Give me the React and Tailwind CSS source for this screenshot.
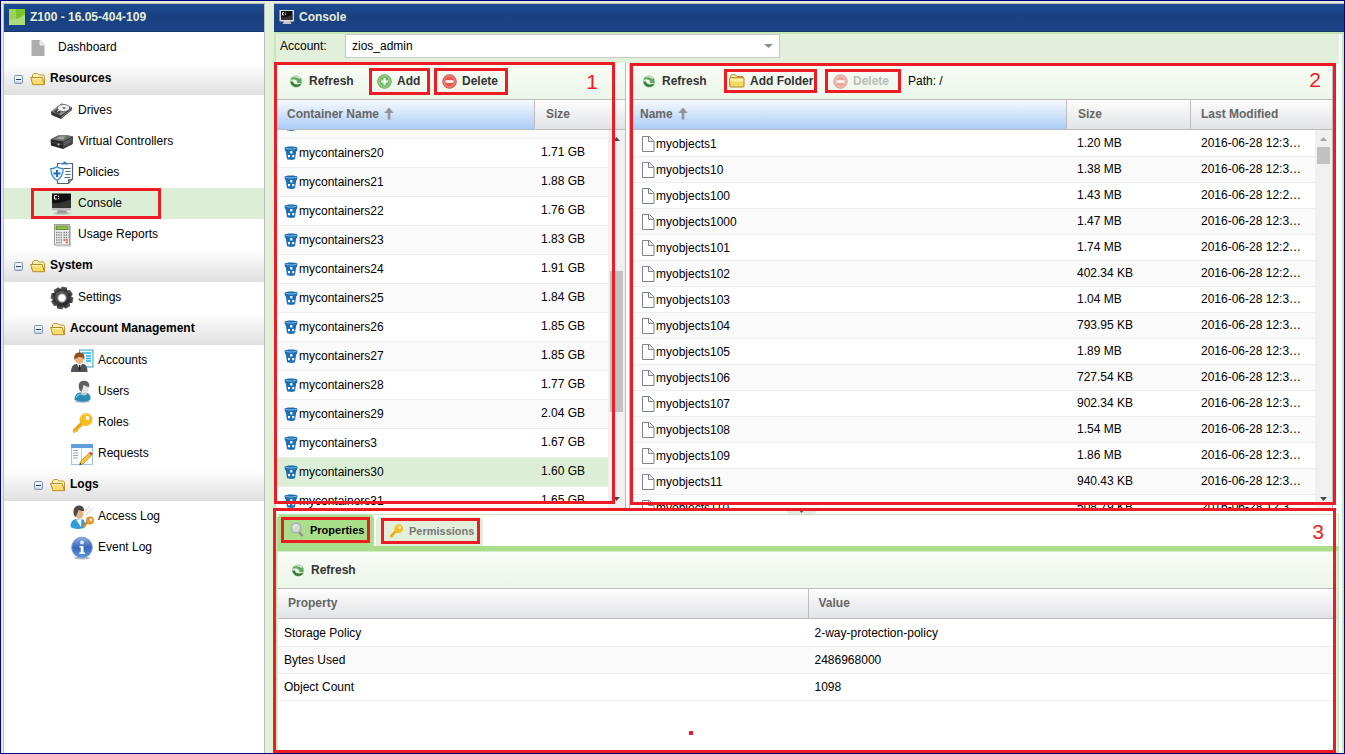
import React from "react";

/* ---------- icons ---------- */

const PageIcon = () => (
  <svg width="14" height="16" viewBox="0 0 14 16" aria-hidden="true">
    <path d="M0.500 0H9L13.500 5V16H0.500Z" fill="#adadad" />
    <path d="M9 0.500V5H13" fill="#e4e4e4" stroke="#fff" strokeWidth="0.800" />
  </svg>
);

const ExpanderIcon = () => (
  <svg width="9" height="9" viewBox="0 0 9 9" aria-hidden="true">
    <rect x="0.500" y="0.500" width="8" height="8" rx="1" fill="#eef2f7" stroke="#7f96b5" />
    <path d="M1 6.500H8V8H1Z" fill="#c5d0df" />
    <path d="M2 4.500H7" stroke="#1c3a6b" />
  </svg>
);

const OpenFolderIcon = () => (
  <svg width="16" height="14" viewBox="0 0 16 14" aria-hidden="true">
    <path d="M2.500 12V3L4 1.500H7.500L9 3H13.500L14.500 4.500V12.500" fill="#fdf3b4" stroke="#c09434" />
    <path d="M0.600 5.500H12.300L14.400 12.700H2.800Z" fill="#f9dc6b" stroke="#b98a29" strokeLinejoin="round" />
    <path d="M1.800 6.700H11.600" stroke="#fff6c4" />
  </svg>
);

const FolderIcon = () => (
  <svg width="16" height="14" viewBox="0 0 16 14" aria-hidden="true">
    <path d="M1.500 4V2L2.500 0.800H6.500L8 2.500H14V5" fill="#fdf0b0" stroke="#bd8f33" />
    <rect x="0.700" y="3.700" width="14.300" height="9.300" rx="1" fill="#f8d75e" stroke="#b5862a" />
    <path d="M1.500 4.800H14.200V7.500H1.500Z" fill="#fff3a8" />
  </svg>
);

const DriveIcon = () => (
  <svg width="24" height="24" viewBox="0 0 24 24" aria-hidden="true">
    <path d="M1 12.500L12 4.500L22 8.500V11L11 20L1.500 16Z" fill="#333" />
    <path d="M1 12.300L12 4.500L22 8.500L11 16.500Z" fill="#8f8f8f" />
    <ellipse cx="13.500" cy="9" rx="6.200" ry="3.500" fill="#f1f1f1" stroke="#4a4a4a" strokeWidth="0.700" />
    <ellipse cx="13.800" cy="9" rx="2" ry="1.100" fill="#7a7a7a" />
    <path d="M3.500 12.500L7.500 10L11 13L8.500 15Z" fill="#3f3f3f" />
    <path d="M7 12.500L13 9" stroke="#fff" strokeWidth="0.900" />
    <path d="M11 18.500L22 10" stroke="#a9a9a9" strokeWidth="0.800" />
  </svg>
);

const ControllerIcon = () => (
  <svg width="24" height="24" viewBox="0 0 24 24" aria-hidden="true">
    <path d="M0.500 9.500L8 5.500H18L23 6.500L22.500 14L13 19L1 15.500Z" fill="#242424" />
    <path d="M0.500 9.500L8 5.500H18L23 6.500L13 11.500Z" fill="#6e6e6e" />
    <path d="M6 8.500L10 6.500H16L13 9.500Z" fill="#a5a5a5" />
    <path d="M13 11.500L23 6.500L22.500 14L13 19Z" fill="#454545" />
    <path d="M1 12L12.500 14.500" stroke="#555" strokeWidth="0.800" />
    <path d="M14 15L21.500 11M14 13L21.500 9" stroke="#8a8a8a" strokeWidth="0.600" />
    <circle cx="8.500" cy="14.500" r="1" fill="#c8c8c8" />
  </svg>
);

const PolicyIcon = () => (
  <svg width="24" height="24" viewBox="0 0 24 24" aria-hidden="true">
    <path d="M7.500 5.500V2.500H10.500M18.500 2.500H22.500V18L18.500 22.500H7.500V20" fill="none" stroke="#50617a" strokeWidth="1.200" />
    <path d="M18.500 22.500V18.500H22.500" fill="#8594a8" stroke="#50617a" />
    <path d="M11 3.500V2H13.500V0.800H16V2H18.500V3.500Z" fill="#2e7cc2" />
    <path d="M14 7.500H20.500M15.500 10.500H20.500M15.500 13.500H20.500M14.500 16.500H20.500" stroke="#50617a" strokeWidth="1.200" />
    <path d="M7 5.700C5 7.200 3 7.500 0.800 7.600C0.800 13 2.500 17 7 19.500C11.500 17 13.200 13 13.200 7.600C11 7.500 9 7.200 7 5.700Z" fill="#e9f4fd" stroke="#2f86cc" strokeWidth="1.200" />
    <path d="M7 9V16M3.500 12.500H10.500" stroke="#1f6fb5" strokeWidth="2" />
  </svg>
);

const ConsoleIcon = () => (
  <svg width="24" height="24" viewBox="0 0 24 24" aria-hidden="true">
    <ellipse cx="12" cy="21.500" rx="9" ry="1.600" fill="#c3cbc0" />
    <path d="M8 18H16L17.500 21.500H6.500Z" fill="#9c9c9c" />
    <path d="M2 16H21V18.500H2Z" fill="#bcbcbc" />
    <rect x="2" y="1.500" width="19" height="14.500" fill="#111" />
    <path d="M2 11C8 12 15 10 21 7V16H2Z" fill="#363636" />
    <path d="M6.800 3.500H4.500V7H6.800M8.500 3.800V5M8.500 6V7.200" stroke="#fff" fill="none" />
  </svg>
);

const SmallConsoleIcon = () => (
  <svg width="16" height="16" viewBox="0 0 16 16" aria-hidden="true">
    <path d="M5 12H11L12.500 15H3.500Z" fill="#c4c4c4" />
    <rect x="0.500" y="1" width="14.500" height="11.500" rx="0.500" fill="#dcdcdc" />
    <rect x="2" y="2" width="11.500" height="9" fill="#101010" />
    <path d="M2 8.500C6 9 10 7.500 13.500 5.500V11H2Z" fill="#333" />
    <path d="M5 3.500H3.500V6H5M6.500 3.600V4.400M6.500 5.200V6" stroke="#fff" strokeWidth="0.900" fill="none" />
  </svg>
);

const CalculatorIcon = () => (
  <svg width="24" height="24" viewBox="0 0 24 24" aria-hidden="true">
    <rect x="4.500" y="1.500" width="15" height="20.500" fill="#f0f0f0" stroke="#9b9b9b" />
    <rect x="6" y="3" width="12" height="3.600" fill="#8cc63f" stroke="#55702c" strokeWidth="0.800" />
    <path d="M6 9.500H12M6 12H12M6 14.500H12M6 17H12M6 19.500H12" stroke="#858585" strokeWidth="1.300" strokeDasharray="1.400 0.900" />
    <path d="M13.500 9.500H18.500M13.500 12H18.500M13.500 14.500H18.500" stroke="#777" strokeWidth="1.300" strokeDasharray="1.400 0.900" />
    <path d="M13.500 17H18.500M16 19.500H18.500" stroke="#d43a2c" strokeWidth="1.700" strokeDasharray="1.800 0.700" />
    <path d="M20.600 3V23H6" stroke="#c4c4c4" fill="none" />
  </svg>
);

const GearIcon = () => (
  <svg width="24" height="24" viewBox="0 0 24 24" aria-hidden="true">
    <defs>
      <linearGradient id="gear" x1="0" y1="0" x2="0.600" y2="1">
        <stop offset="0" stopColor="#707070" />
        <stop offset="1" stopColor="#262626" />
      </linearGradient>
    </defs>
    <g fill="url(#gear)">
      <circle cx="12" cy="12" r="9" />
      {[0, 45, 90, 135, 180, 225, 270, 315].map((a) => (
        <path key={a} d="M8 5L9.300 0.800H14.700L16 5Z" transform={`rotate(${a + 12} 12 12)`} />
      ))}
    </g>
    <circle cx="12" cy="12" r="4.200" fill="#fff" stroke="#8d8d8d" />
  </svg>
);

const AccountsIcon = () => (
  <svg width="24" height="24" viewBox="0 0 24 24" aria-hidden="true">
    <rect x="9.500" y="1" width="13.500" height="17" fill="#e8f7fd" stroke="#3b9fd0" />
    <path d="M12 4H21M16 7H21M16 9.500H21M16 12H21" stroke="#27b4e8" strokeWidth="1.500" />
    <path d="M1 23C1 18 3 15.500 6 15H13C16 15.500 17.500 18 17.500 23Z" fill="#4f5257" />
    <path d="M7 15L9.500 20L12 15Z" fill="#f4f4f4" />
    <path d="M9 16H10.200L10.800 20L9.500 22L8.500 20Z" fill="#222" />
    <ellipse cx="9.300" cy="10" rx="4.200" ry="5" fill="#eeb27a" />
    <path d="M4.500 11C3.500 6 5.500 3.500 9.500 3.500S15 6 14.200 11C13.500 9 12 7.800 9 8C7.500 8.500 5.800 9 4.500 11Z" fill="#8b4f20" />
  </svg>
);

const UserIcon = () => (
  <svg width="24" height="24" viewBox="0 0 24 24" aria-hidden="true">
    <ellipse cx="12.500" cy="21.500" rx="8" ry="1.500" fill="#bfc7cb" />
    <path d="M4.500 19.500C4.500 15 7 12.800 10 12.500H16C19.500 13.500 21 16 20.500 19.500C17 22.500 8 22.500 4.500 19.500Z" fill="#2a8cb5" />
    <path d="M6 17.500C7 15 8.500 14.300 11 14.500" stroke="#73c4df" strokeWidth="1.200" fill="none" />
    <path d="M11 11H17V14C15 16 12.500 16 11 14Z" fill="#c7c7c7" />
    <ellipse cx="14.500" cy="8" rx="4.300" ry="5.300" fill="#e2e2e2" />
    <path d="M9 8.500C8 3.500 10 0.800 14 0.800S20 3.500 19 7C17 7 15 6 13.500 4.800C13.500 7.500 12 9 11.800 11.500C10 11.500 9.300 10 9 8.500Z" fill="#606060" />
  </svg>
);

const KeyIcon = ({ size = 24 }) => (
  <svg width={size} height={size} viewBox="0 0 24 24" aria-hidden="true">
    <path d="M12 9.500L15 12.500L8 19L7.500 21.500L5.500 20.500L5 22L3 21.500V18.500Z" fill="#f0b321" />
    <circle cx="16" cy="8.500" r="6.500" fill="#f6bd20" />
    <path d="M11 12.500L4 19.500" stroke="#d98e16" />
    <path d="M10.500 7C11.500 4 14.500 2.800 17 3.200" stroke="#ffdf70" fill="none" />
    <circle cx="17.500" cy="7" r="1.900" fill="#fff" />
  </svg>
);

const RequestsIcon = () => (
  <svg width="24" height="24" viewBox="0 0 24 24" aria-hidden="true">
    <rect x="1.500" y="2.500" width="21" height="20" fill="#f9fcff" stroke="#9ec4e8" />
    <path d="M1 2H23V6H1Z" fill="#5f9fdc" />
    <path d="M3 8.500H8M3 11H8M3 13.500H8M3 16H8" stroke="#9aa9bc" />
    <path d="M11.500 6V22" stroke="#bdd7ef" />
    <path d="M9.500 23L10.500 19.500L19 11L21.500 13.500L13 22Z" fill="#f5c232" stroke="#b98a22" strokeWidth="0.700" />
    <path d="M19 11L20.500 9.500L23 12L21.500 13.500Z" fill="#d6453e" />
    <path d="M9.500 23L10.200 20.800L11.800 22.300Z" fill="#333" />
  </svg>
);

const AccessLogIcon = () => (
  <svg width="24" height="24" viewBox="0 0 24 24" aria-hidden="true">
    <path d="M14 7L20 1M15.500 10L23 3" stroke="#dedede" strokeWidth="1.200" />
    <path d="M0.500 22C0.500 17 2.500 14.500 6 14H12C14.500 15 15.500 17.500 15.500 22C12 24.500 4 24.500 0.500 22Z" fill="#2f9fd6" />
    <path d="M6 14.500L11 22L11.500 14Z" fill="#f3f7fa" />
    <ellipse cx="9.300" cy="8.500" rx="4.200" ry="5.300" fill="#e6b586" />
    <path d="M3.500 8C3 3 5.500 0.500 9 0.500S14.500 3 14 6C11 6 9.500 5.500 8.500 5C8 8 6.500 9 6 12C4.500 11.500 3.800 10 3.500 8Z" fill="#4b4b4b" />
    <path d="M17 15.500L19 17.500L14 22.500L12 22Z" fill="#e08a1e" />
    <circle cx="20" cy="15.500" r="3.700" fill="#f19d2c" stroke="#c8701a" strokeWidth="0.600" />
    <circle cx="21" cy="14.800" r="1.200" fill="#fff" />
  </svg>
);

const InfoIcon = () => (
  <svg width="24" height="24" viewBox="0 0 24 24" aria-hidden="true">
    <defs>
      <linearGradient id="info" x1="0" y1="0" x2="0" y2="1">
        <stop offset="0" stopColor="#8fb0e0" />
        <stop offset="0.500" stopColor="#3566bd" />
        <stop offset="1" stopColor="#5a9bea" />
      </linearGradient>
    </defs>
    <ellipse cx="12" cy="22" rx="8" ry="1.400" fill="#b5bac4" />
    <circle cx="12" cy="11.500" r="10.300" fill="url(#info)" stroke="#7b98c8" />
    <circle cx="12" cy="6.500" r="2" fill="#dfe8f8" />
    <path d="M9.500 10H13.500V16.500H15V18H9.300V16.500H10.700V11.500H9.500Z" fill="#fff" />
  </svg>
);

const RefreshIcon = () => (
  <svg width="14" height="14" viewBox="0 0 14 14" aria-hidden="true">
    <circle cx="7" cy="7.500" r="5.600" fill="#e3f0e1" stroke="#9fc09d" strokeWidth="0.900" />
    <path d="M2 3.800C5 2.600 8.500 3 10.500 5L12 3.800L12.300 9.300L6.500 9L8.500 7.300C7 5.500 5 5 2 5.800Z" fill="#5fab5c" />
    <path d="M1.500 7.500C1.800 10.500 4 12.800 7 13C9.500 13 11.500 11.800 12.300 10L9 10.200C7 10.800 4.500 10 3.800 7.500Z" fill="#2f7d38" />
    <path d="M4.500 6L8 9.500" stroke="#fff" strokeWidth="1.200" />
  </svg>
);

const AddIcon = () => (
  <svg width="15" height="15" viewBox="0 0 15 15" aria-hidden="true">
    <circle cx="7.500" cy="7.500" r="6.800" fill="#6fb964" stroke="#569a4d" strokeWidth="0.800" />
    <circle cx="7.500" cy="7.500" r="5.600" fill="none" stroke="#b9dfb1" strokeWidth="0.900" />
    <path d="M7.500 4V11M4 7.500H11" stroke="#fff" strokeWidth="2" />
  </svg>
);

const RemoveIcon = () => (
  <svg width="15" height="15" viewBox="0 0 15 15" aria-hidden="true">
    <circle cx="7.500" cy="7.500" r="6.800" fill="#e4584d" stroke="#c4453b" strokeWidth="0.800" />
    <circle cx="7.500" cy="7.500" r="5.600" fill="none" stroke="#f2a49c" strokeWidth="0.900" />
    <rect x="3.500" y="6.200" width="8" height="2.600" fill="#fff" />
  </svg>
);

const SearchIcon = () => (
  <svg width="16" height="16" viewBox="0 0 16 16" aria-hidden="true">
    <path d="M9.500 9.500L13.500 14" stroke="#8b8b8b" strokeWidth="2.400" />
    <circle cx="7" cy="6" r="4.800" fill="#d3dccf" stroke="#adadad" strokeWidth="1.500" />
    <path d="M4.500 5C5 3.500 6.500 2.900 8 3.300" stroke="#fff" fill="none" />
  </svg>
);

const BucketIcon = () => (
  <svg width="14" height="14" viewBox="0 0 14 14" aria-hidden="true">
    <path d="M0.500 2C0.500 0 13.500 0 13.500 2L13 4.800L12.200 5.500L11 13C9.500 14.200 4.500 14.200 3 13L1.800 5.500L1 4.800Z" fill="#1c6fb5" />
    <path d="M1.500 2.200C4 3.300 10 3.300 12.500 2.200" stroke="#8fbfe4" strokeWidth="0.900" fill="none" />
    <path d="M6.200 5H8.400V7.400H6.200ZM4 9H6V11.200H4ZM8.200 9H10.200V11.200H8.200Z" fill="#fff" />
  </svg>
);

const FileIcon = () => (
  <svg width="13" height="16" viewBox="0 0 13 16" aria-hidden="true">
    <path d="M0.500 0.500H7.500L12 5V15.500H0.500Z" fill="#fff" stroke="#7b828b" />
    <path d="M6.500 1V5.500H11.500" fill="#eceef0" stroke="#7b828b" />
  </svg>
);

const SortIcon = () => (
  <svg width="10" height="13" viewBox="0 0 10 13" aria-hidden="true">
    <path d="M5 0.500L9.700 6H6.300V12.500H3.700V6H0.300Z" fill="#939599" />
  </svg>
);

const Arrow = ({ down = false, color = "#4a4a4a", width = 7 }) => (
  <svg width={width} height="4" viewBox="0 0 7 4" preserveAspectRatio="none" aria-hidden="true">
    <path d={down ? "M0 0H7L3.500 4Z" : "M0 4H7L3.500 0Z"} fill={color} />
  </svg>
);

/* ---------- data ---------- */

const NAV = [
  { label: "Dashboard", icon: PageIcon, level: 0 },
  { label: "Resources", group: true, level: 0 },
  { label: "Drives", icon: DriveIcon, level: 1 },
  { label: "Virtual Controllers", icon: ControllerIcon, level: 1 },
  { label: "Policies", icon: PolicyIcon, level: 1 },
  { label: "Console", icon: ConsoleIcon, level: 1, active: true },
  { label: "Usage Reports", icon: CalculatorIcon, level: 1 },
  { label: "System", group: true, level: 0 },
  { label: "Settings", icon: GearIcon, level: 1 },
  { label: "Account Management", group: true, level: 1 },
  { label: "Accounts", icon: AccountsIcon, level: 2 },
  { label: "Users", icon: UserIcon, level: 2 },
  { label: "Roles", icon: KeyIcon, level: 2 },
  { label: "Requests", icon: RequestsIcon, level: 2 },
  { label: "Logs", group: true, level: 1 },
  { label: "Access Log", icon: AccessLogIcon, level: 2 },
  { label: "Event Log", icon: InfoIcon, level: 2 },
];

// The first row is scrolled almost fully out of view.
const CONTAINERS = [
  ["", ""],
  ["mycontainers20", "1.71 GB"],
  ["mycontainers21", "1.88 GB"],
  ["mycontainers22", "1.76 GB"],
  ["mycontainers23", "1.83 GB"],
  ["mycontainers24", "1.91 GB"],
  ["mycontainers25", "1.84 GB"],
  ["mycontainers26", "1.85 GB"],
  ["mycontainers27", "1.85 GB"],
  ["mycontainers28", "1.77 GB"],
  ["mycontainers29", "2.04 GB"],
  ["mycontainers3", "1.67 GB"],
  ["mycontainers30", "1.60 GB"],
  ["mycontainers31", "1.65 GB"],
];

const OBJECTS = [
  ["myobjects1", "1.20 MB", "2016-06-28 12:3…"],
  ["myobjects10", "1.38 MB", "2016-06-28 12:3…"],
  ["myobjects100", "1.43 MB", "2016-06-28 12:2…"],
  ["myobjects1000", "1.47 MB", "2016-06-28 12:3…"],
  ["myobjects101", "1.74 MB", "2016-06-28 12:2…"],
  ["myobjects102", "402.34 KB", "2016-06-28 12:2…"],
  ["myobjects103", "1.04 MB", "2016-06-28 12:3…"],
  ["myobjects104", "793.95 KB", "2016-06-28 12:3…"],
  ["myobjects105", "1.89 MB", "2016-06-28 12:3…"],
  ["myobjects106", "727.54 KB", "2016-06-28 12:3…"],
  ["myobjects107", "902.34 KB", "2016-06-28 12:3…"],
  ["myobjects108", "1.54 MB", "2016-06-28 12:3…"],
  ["myobjects109", "1.86 MB", "2016-06-28 12:3…"],
  ["myobjects11", "940.43 KB", "2016-06-28 12:3…"],
  ["myobjects110", "508.79 KB", "2016-06-28 12:3…"],
];

const PROPERTIES = [
  ["Storage Policy", "2-way-protection-policy"],
  ["Bytes Used", "2486968000"],
  ["Object Count", "1098"],
];

/* ---------- shared pieces ---------- */

const TITLE_BAR =
  "flex h-7 shrink-0 items-center border-b border-[#17386f] bg-linear-to-b from-[#1e4c95] from-0% via-[#19407f] via-45% to-[#1b4488] pb-0.5 font-bold text-[#e6eed9]";
const TOOLBAR = "flex shrink-0 items-center bg-linear-to-b from-[#f8fcf6] to-[#ecf6e9]";
const HEAD = "h-[31px] border-y border-[#bcbcbc] bg-linear-to-b from-[#fdfdfd] to-[#e2e3e6] pb-0.5 text-left font-bold text-[#666]";
const HEAD_SORTED = "h-[31px] border-y border-[#bcbcbc] bg-linear-to-b from-[#f7fafe] to-[#aaccf6] pb-0.5 text-left font-bold text-[#666]";
const TABLE = "w-full table-fixed border-separate border-spacing-0";
const MARK = "pointer-events-none absolute border-[3px] border-[#ed1c24]";
const MARK_NUMBER = "pointer-events-none absolute text-[21px] leading-6 text-[#ed1c24]";

function ToolButton({ icon, children, className = "gap-1.5", disabled = false }) {
  return (
    <button
      type="button"
      disabled={disabled}
      className={`flex items-center whitespace-nowrap font-bold ${className}`}
    >
      {icon}
      <span>{children}</span>
    </button>
  );
}

const INDENT = ["pl-[10px]", "pl-[30px]", "pl-[50px]"];

function NavItem({ item }) {
  const Icon = item.icon;
  if (item.group) {
    return (
      <li>
        <button
          type="button"
          aria-expanded="true"
          className={`flex h-8 w-full items-center bg-linear-to-b from-white to-[#e0e0e0] pb-0.5 font-bold ${INDENT[item.level]}`}
        >
          <span className="mr-[7px] pt-0.5"><ExpanderIcon /></span>
          <span className="mr-1 pt-0.5"><OpenFolderIcon /></span>
          {item.label}
        </button>
      </li>
    );
  }
  const pad = item.level === 0 ? "pl-[27px] gap-[13px]" : item.level === 1 ? "pl-[46px] gap-1" : "pl-[66px] gap-1";
  return (
    <li>
      <a
        href={"#" + item.label.toLowerCase().replace(" ", "-")}
        aria-current={item.active ? "page" : undefined}
        className={`relative flex h-[31px] items-center ${pad} ${item.active ? "bg-[#dcefd6]" : ""}`}
      >
        <Icon />
        <span className="pb-0.5">{item.label}</span>
        {item.active && <span className={`${MARK} inset-y-0 left-[27px] w-[130px]`} />}
      </a>
    </li>
  );
}

function Sidebar() {
  return (
    <aside className="flex w-[262px] shrink-0 flex-col border-x border-t border-[#bcbcbc] bg-white">
      <div className={`${TITLE_BAR} gap-[5px] pl-[5px]`}>
        <svg width="16" height="16" viewBox="0 0 16 16" aria-hidden="true">
          <path d="M0 0H16V16H0Z" fill="#8ccb47" />
          <path d="M0 0H7V16H0Z" fill="#9ad45f" />
          <path d="M0 11C5 11 12 9 16 5V16H0Z" fill="#a9dc7c" />
          <path d="M7 0H16V5C13 7.500 10 9 7 10Z" fill="#7cc22f" />
        </svg>
        Z100 - 16.05-404-109
      </div>
      <nav aria-label="Main">
        <ul>
          {NAV.map((item) => (
            <NavItem key={item.label} item={item} />
          ))}
        </ul>
      </nav>
    </aside>
  );
}

function Scrollbar({ topColor, children }) {
  return (
    <div className="flex w-[17px] shrink-0 flex-col items-center bg-[#f0f0f0] py-[7px]" aria-hidden="true">
      <Arrow color={topColor} />
      <div className="flex w-full flex-1 flex-col items-center">{children}</div>
      <Arrow down />
    </div>
  );
}

function ContainerPanel() {
  return (
    <section aria-label="Containers" className="relative flex w-[350px] shrink-0 flex-col border-r border-[#bcbcbc] bg-white">
      <div className={`${TOOLBAR} h-9 pl-[13px] text-[#333]`}>
        <ToolButton icon={<RefreshIcon />} className="w-20 gap-1.5">Refresh</ToolButton>
        <ToolButton icon={<AddIcon />} className="h-[27px] w-[61px] gap-[5px] border-[3px] border-[#ed1c24] pl-[5px]">Add</ToolButton>
        <ToolButton icon={<RemoveIcon />} className="ml-1 h-[27px] w-[74px] gap-[5px] border-[3px] border-[#ed1c24] pl-[5px]">Delete</ToolButton>
      </div>
      <table className={TABLE}>
        <thead>
          <tr>
            <th scope="col" aria-sort="ascending" className={`${HEAD_SORTED} pl-[11px]`}>
              <span className="flex items-center gap-[5px]">Container Name <SortIcon /></span>
            </th>
            <th scope="col" className={`${HEAD} w-[91px] border-l pl-[11px]`}>Size</th>
          </tr>
        </thead>
      </table>
      <div className="flex min-h-0 flex-1">
        <div className="min-w-0 flex-1 overflow-hidden">
          <table aria-label="Containers" className={`${TABLE} -mt-5`}>
            <tbody>
              {CONTAINERS.map(([name, size], i) => {
                const bg = name === "mycontainers30" ? "bg-[#dcefd6]" : i % 2 === 0 ? "bg-[#fafafa]" : "bg-white";
                return (
                  <tr key={i} className={bg}>
                    <td className="h-[29px] border-b border-[#ededed] pl-2">
                      <span className="flex items-center gap-px"><BucketIcon />{name}</span>
                    </td>
                    <td className="h-[29px] w-[74px] border-b border-[#ededed] pb-0.5 pl-[7px]">{size}</td>
                  </tr>
                );
              })}
            </tbody>
          </table>
        </div>
        <Scrollbar>
          <div className="grow-129 basis-0" />
          <div className="w-[13px] grow-140 basis-0 bg-[#c1c1c1]" />
          <div className="grow-84 basis-0" />
        </Scrollbar>
      </div>
      <span className={`${MARK} -left-0.5 right-2.5 -top-px bottom-1`} />
      <span className={`${MARK_NUMBER} right-[27px] top-[7px]`}>1</span>
    </section>
  );
}

function ObjectPanel() {
  return (
    <section aria-label="Objects" className="relative ml-[3px] mr-1.5 flex min-w-0 flex-1 flex-col border-x border-[#bcbcbc] bg-white">
      <div className={`${TOOLBAR} h-9 pl-3 text-[#333]`}>
        <ToolButton icon={<RefreshIcon />} className="w-[82px] gap-1.5">Refresh</ToolButton>
        <ToolButton icon={<FolderIcon />} className="h-6 w-[93px] gap-[5px] border-[3px] border-[#ed1c24] pl-0.5">Add Folder</ToolButton>
        <ToolButton
          disabled
          icon={<span className="opacity-50"><RemoveIcon /></span>}
          className="ml-2 h-6 w-[76px] gap-[5px] border-[3px] border-[#ed1c24] pl-[5px] text-[#b9bdb8]"
        >
          Delete
        </ToolButton>
        <span className="ml-[7px] text-black">Path: /</span>
      </div>
      <table className={TABLE}>
        <thead>
          <tr>
            <th scope="col" aria-sort="ascending" className={`${HEAD_SORTED} pl-2.5`}>
              <span className="flex items-center gap-[5px]">Name <SortIcon /></span>
            </th>
            <th scope="col" className={`${HEAD} w-[124px] border-l pl-[11px]`}>Size</th>
            <th scope="col" className={`${HEAD} w-[142px] border-l pl-2.5`}>Last Modified</th>
          </tr>
        </thead>
      </table>
      <div className="flex min-h-0 flex-1">
        <div className="min-w-0 flex-1 overflow-hidden pt-px">
          <table aria-label="Objects" className={TABLE}>
            <tbody>
              {OBJECTS.map(([name, size, date], i) => (
                <tr key={name} className={i % 2 ? "bg-[#fafafa]" : "bg-white"}>
                  <td className="h-[26px] border-b border-[#ededed] pl-3">
                    <span className="flex items-center gap-px"><FileIcon />{name}</span>
                  </td>
                  <td className="h-[26px] w-[124px] border-b border-[#ededed] pb-0.5 pl-[11px]">{size}</td>
                  <td className="h-[26px] w-[125px] whitespace-nowrap border-b border-[#ededed] pb-0.5 pl-[11px]">{date}</td>
                </tr>
              ))}
            </tbody>
          </table>
        </div>
        <Scrollbar topColor="#a3a3a3">
          <div className="mt-1.5 h-[17px] w-[13px] bg-[#c1c1c1]" />
        </Scrollbar>
      </div>
      <span className={`${MARK} -right-1 bottom-[3px] left-0 top-0`} />
      <span className={`${MARK_NUMBER} right-[11px] top-[5px]`}>2</span>
    </section>
  );
}

function DetailPanel() {
  return (
    <section aria-label="Container details" className="relative flex h-[245px] shrink-0 flex-col bg-white">
      <div className="flex h-1.5 justify-center pr-3">
        <div className="flex w-[30px] items-end justify-center rounded-b bg-[#e6e6e6] pb-px">
          <Arrow down />
        </div>
      </div>
      <div className="flex min-h-0 flex-1 flex-col border border-b-2 border-[#c5e8b7]">
        <div role="tablist" className="flex h-[31px] shrink-0 items-end gap-0.5">
          <button
            type="button"
            role="tab"
            aria-selected="true"
            className="flex h-[31px] w-[97px] items-center rounded-t bg-[#a9df8b] pb-0.5 pl-1 font-bold text-black"
          >
            <span className="flex h-[26px] w-[89px] items-center gap-[5px] whitespace-nowrap border-[3px] border-[#ed1c24] pl-[5px] text-[11px]">
              <SearchIcon />
              Properties
            </span>
          </button>
          <button
            type="button"
            role="tab"
            aria-selected="false"
            className="flex h-[29px] w-[107px] items-center rounded-t bg-[#e2f0db] pb-0.5 pl-[5px] font-bold text-[#777]"
          >
            <span className="flex h-[26px] w-[99px] items-center gap-[5px] whitespace-nowrap border-[3px] border-[#ed1c24] pl-1 text-[11px]">
              <KeyIcon size={16} />
              Permissions
            </span>
          </button>
        </div>
        <div className="h-[5px] shrink-0 bg-[#a9df8b]" />
        <div className="flex min-h-0 flex-1 flex-col border-x border-t border-[#d3edc8]">
          <div className={`${TOOLBAR} h-9 pl-[13px] text-[#333]`}>
            <ToolButton icon={<RefreshIcon />}>Refresh</ToolButton>
          </div>
          <table className={TABLE}>
            <thead>
              <tr>
                <th scope="col" className={`${HEAD} w-1/2 pl-2.5`}>Property</th>
                <th scope="col" className={`${HEAD} border-l pl-2.5`}>Value</th>
              </tr>
            </thead>
            <tbody>
              {PROPERTIES.map(([name, value], i) => (
                <tr key={name} className={i % 2 ? "h-[27px] bg-[#fafafa]" : "h-[27px] bg-white first:h-7"}>
                  <td className="border-b border-[#ededed] pl-1.5">{name}</td>
                  <td className="border-b border-[#ededed] pl-[7px]">{value}</td>
                </tr>
              ))}
            </tbody>
          </table>
        </div>
      </div>
      <span className={`${MARK} -left-[3px] bottom-0 right-[3px] top-0`} />
      <span className={`${MARK_NUMBER} right-[15px] top-3`}>3</span>
      <span className="pointer-events-none absolute bottom-[18px] left-[413px] size-1 bg-[#ed1c24]" />
    </section>
  );
}

export default function App() {
  return (
    <div className="flex h-screen overflow-hidden border border-[#000080] bg-[#e2f0db] pl-0.5 pt-0.5 font-['Liberation_Sans',Arial,sans-serif] text-[12px] leading-4 text-black">
      <Sidebar />
      <main className="ml-[9px] flex min-w-0 flex-1 flex-col border-t border-[#bcbcbc]">
        <h1 className={`${TITLE_BAR} gap-1 pl-[5px]`}>
          <SmallConsoleIcon />
          Console
        </h1>
        <div className="flex min-h-0 flex-1 flex-col border-x-2 border-t-2 border-[#c5e8b7] bg-white pr-[3px]">
          <div className="flex h-[29px] shrink-0 items-start bg-[#e2f0db] pl-1">
            <label htmlFor="account" className="w-[65px] pt-1">Account:</label>
            <div className="relative w-[435px]">
              <select
                id="account"
                className="h-6 w-full appearance-none border border-[#c9c9c9] bg-white pl-1.5 outline-none"
                defaultValue="zios_admin"
              >
                <option>zios_admin</option>
              </select>
              <span className="pointer-events-none absolute inset-y-0 right-[7px] flex items-center">
                <Arrow down color="#8c8c8c" width={9} />
              </span>
            </div>
          </div>
          <div className="flex min-h-0 flex-1">
            <ContainerPanel />
            <ObjectPanel />
          </div>
          <DetailPanel />
        </div>
      </main>
    </div>
  );
}
